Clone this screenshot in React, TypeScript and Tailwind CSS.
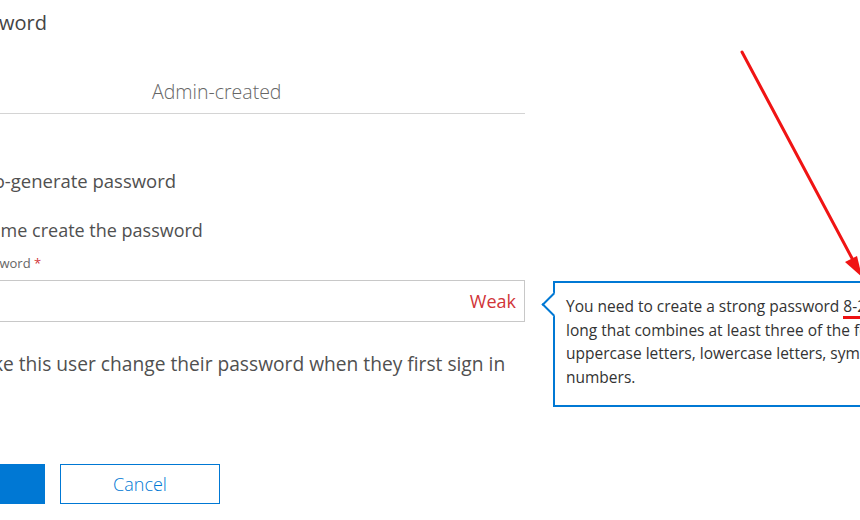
import React from 'react';

const tipLines = [
  'You need to create a strong password 8-256 characters',
  'long that combines at least three of the following:',
  'uppercase letters, lowercase letters, symbols, and',
  'numbers.',
];

const App = () => {
  return (
    <div className="relative w-[860px] h-[520px] overflow-hidden bg-white font-['Open_Sans',sans-serif] text-[#505050]">
      <div className="flex flex-col w-[525px]">
        {/* Panel title, cut off at the left */}
        <h1 className="mt-[9px] -ml-[100px] whitespace-nowrap text-[20px] leading-[28px] font-normal text-[#444]">
          Reset password
        </h1>

        {/* Tabs */}
        <div className="mt-[43px] border-b border-[#d4d4d4] pb-[8px]">
          <span className="ml-[152px] text-[19.5px] leading-[24px] font-light text-[#666]">Admin-created</span>
        </div>

        {/* Radios */}
        <label className="mt-[55px] -ml-[36px] flex items-center whitespace-nowrap text-[18.5px] leading-[24px]">
          Auto-generate password
        </label>
        <label className="mt-[25px] -ml-[30px] flex items-center whitespace-nowrap text-[18px] leading-[24px]">
          Let me create the password
        </label>

        <span className="mt-[12px] -ml-[28px] whitespace-nowrap text-[13px] leading-[18px] text-[#666]">
          Password <span className="text-[#d13438]">*</span>
        </span>

        <div className="mt-[8px] -ml-[75px] h-[42px] w-[600px] flex items-center justify-end border border-[#c8c8c8] pr-[8px]">
          <span className="text-[18px] leading-[24px] text-[#d13438]">Weak</span>
        </div>

        <label className="mt-[30px] -ml-[35px] whitespace-nowrap text-[19.2px] leading-[24px]">
          Make this user change their password when they first sign in
        </label>

        {/* Buttons */}
        <div className="mt-[88px] flex gap-[15px]">
          <button className="-ml-[115px] h-[40px] w-[160px] bg-[#0078d4] text-white text-[18px]">Reset</button>
          <button className="h-[40px] w-[160px] border border-[#0078d4] bg-white text-[18px] font-light text-[#0078d4]">
            Cancel
          </button>
        </div>
      </div>

      {/* Callout */}
      <div className="absolute left-[553px] top-[281px] h-[126px] w-[340px] border-2 border-[#0078d4] bg-white pl-[11px] pt-[12px]">
        <div className="absolute -left-[10px] top-[13px] h-[17px] w-[17px] rotate-45 border-b-2 border-l-2 border-[#0078d4] bg-white" />
        <div className="relative text-[15.5px] leading-[23.5px] text-[#333] whitespace-nowrap">
          {tipLines.map((line) => (
            <div key={line}>{line}</div>
          ))}
        </div>
      </div>

      {/* Annotation: red underline and arrow */}
      <div className="absolute left-[843px] top-[316px] h-[3px] w-[20px] bg-[#ee1111]" />
      <svg className="absolute left-0 top-0" width="860" height="520" viewBox="0 0 860 520">
        <line x1="742" y1="52" x2="854" y2="262" stroke="#f01414" strokeWidth="3" strokeLinecap="round" />
        <polygon points="862,277 845,262 857,256" fill="#f01414" />
      </svg>
    </div>
  );
};

export default App;
